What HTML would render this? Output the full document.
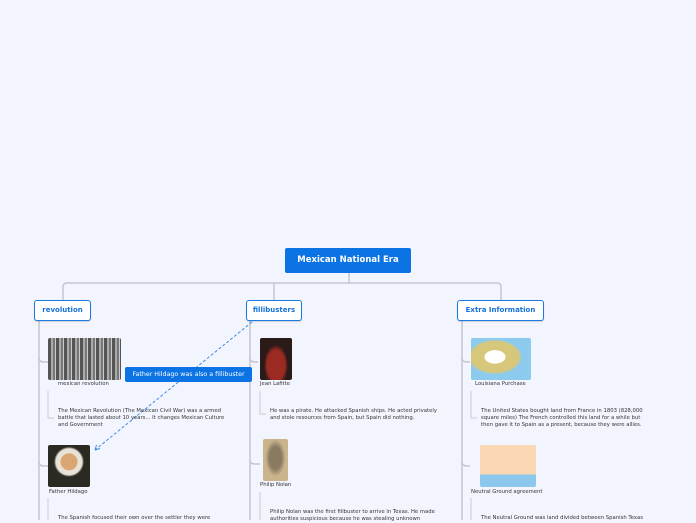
<!DOCTYPE html>
<html><head><meta charset="utf-8"><style>
*{margin:0;padding:0;box-sizing:border-box}
body{width:696px;height:520px;background:#f3f5fe;position:relative;overflow:hidden;font-family:"DejaVu Sans","Liberation Sans",sans-serif}
.a{position:absolute;white-space:nowrap}
.root{left:285px;top:248px;width:126px;height:25px;background:#0b73e3;border-radius:2px;color:#fff;font-weight:bold;font-size:8.5px;text-align:center;line-height:25px}
.box{height:21px;top:300px;background:#fff;border:1.5px solid #1a7be3;border-radius:3px;color:#1572d8;font-weight:bold;font-size:7px;text-align:center;line-height:18px;box-shadow:0 1px 1px rgba(0,0,0,.15)}
.cap{font-size:5.3px;color:#333}
.txt{font-size:5.3px;color:#333;line-height:7px}
.img{position:absolute;border-radius:2px}
</style></head><body>
<svg class="a" style="left:0;top:0" width="696" height="520">
<g fill="none" stroke="#c3c6cd" stroke-width="1.5">
<path d="M349 273V283"/>
<path d="M63 300V287Q63 283 67 283H497Q501 283 501 287V300"/>
<path d="M274 300V283"/>
<path d="M39 321V520"/>
<path d="M39 358Q39 362 44 362H48"/>
<path d="M39 462Q39 466 44 466H48"/>
<path d="M250 321V520"/>
<path d="M250 358Q250 362 255 362H258"/>
<path d="M250 460Q250 464 255 464H260"/>
<path d="M462 321V520"/>
<path d="M462 358Q462 362 467 362H470"/>
<path d="M462 462Q462 466 467 466H470"/>
</g>
<g fill="none" stroke="#c9ccd3" stroke-width="1">
<path d="M48 391V418H54"/>
<path d="M48 498V520"/>
<path d="M260 391V414H266"/>
<path d="M260 492V520"/>
<path d="M471 391V418H477"/>
<path d="M471 498V520"/>
</g>
<path d="M252 322L95 450" stroke="#3d8ce8" stroke-width="1" stroke-dasharray="3,2" fill="none"/>
<path d="M95 450l1.5-5M95 450l5-1.5" stroke="#3d8ce8" stroke-width="1" fill="none"/>
</svg>
<div class="a root">Mexican National Era</div>
<div class="a box" style="left:34px;width:57px">revolution</div>
<div class="a box" style="left:246px;width:56px">fillibusters</div>
<div class="a box" style="left:457px;width:87px">Extra Information</div>

<div class="img" style="left:48px;top:338px;width:73px;height:42px;background:repeating-linear-gradient(90deg,#555 0 3px,#aaa 3px 5px,#777 5px 7px,#ccc 7px 8px)"></div>
<div class="a cap" style="left:58px;top:381px">mexican revolution</div>
<div class="a txt" style="left:58px;top:408px">The Mexican Revolution (The Mexican Civil War) was a armed<br>battle that lasted about 10 years... It changes Mexican Culture<br>and Government</div>
<div class="img" style="left:48px;top:445px;width:42px;height:42px;background:radial-gradient(circle at 50% 40%,#d9a672 0 8px,#e8e2d8 9px 13px,#2a2a22 15px)"></div>
<div class="a cap" style="left:49px;top:489px">Father Hildago</div>

<div class="a" style="left:125px;top:367px;width:127px;height:15px;background:#0b73e3;border-radius:2px;color:#fff;font-size:6.3px;line-height:15px;text-align:center">Father Hildago was also a fillibuster</div>

<div class="img" style="left:260px;top:338px;width:32px;height:42px;background:radial-gradient(ellipse at 50% 65%,#9a2a22 0 9px,#2a1a18 12px)"></div>
<div class="a cap" style="left:260px;top:381px">Jean Lafitte</div>
<div class="a txt" style="left:270px;top:408px">He was a pirate. He attacked Spanish ships. He acted privately<br>and stole resources from Spain, but Spain did nothing.</div>
<div class="img" style="left:263px;top:439px;width:25px;height:42px;background:radial-gradient(ellipse at 50% 45%,#8a7a62 0 6px,#c9b48c 10px)"></div>
<div class="a cap" style="left:260px;top:482px">Philip Nolan</div>
<div class="a txt" style="left:270px;top:509px">Philip Nolan was the first fillbuster to arrive in Texas. He made<br>authorities suspicious because he was stealing unknown</div>

<div class="img" style="left:471px;top:338px;width:60px;height:42px;background:radial-gradient(ellipse at 40% 45%,#fff 0 10px,#d7c77a 11px 24px,#8ccbee 27px)"></div>
<div class="a cap" style="left:475px;top:381px">Louisiana Purchase</div>
<div class="a txt" style="left:481px;top:408px">The United States bought land from France in 1803 (828,000<br>square miles) The French controlled this land for a while but<br>then gave it to Spain as a present, because they were allies.</div>
<div class="img" style="left:480px;top:445px;width:56px;height:42px;background:linear-gradient(180deg,#fad8b4 0 70%,#8cc8ee 70%)"></div>
<div class="a cap" style="left:471px;top:489px">Neutral Ground agreement</div>
<div class="a txt" style="left:481px;top:515px">The Neutral Ground was land divided between Spanish Texas</div>
<div class="a txt" style="left:58px;top:515px">The Spanish focused their own over the settler they were</div>
</body></html>
